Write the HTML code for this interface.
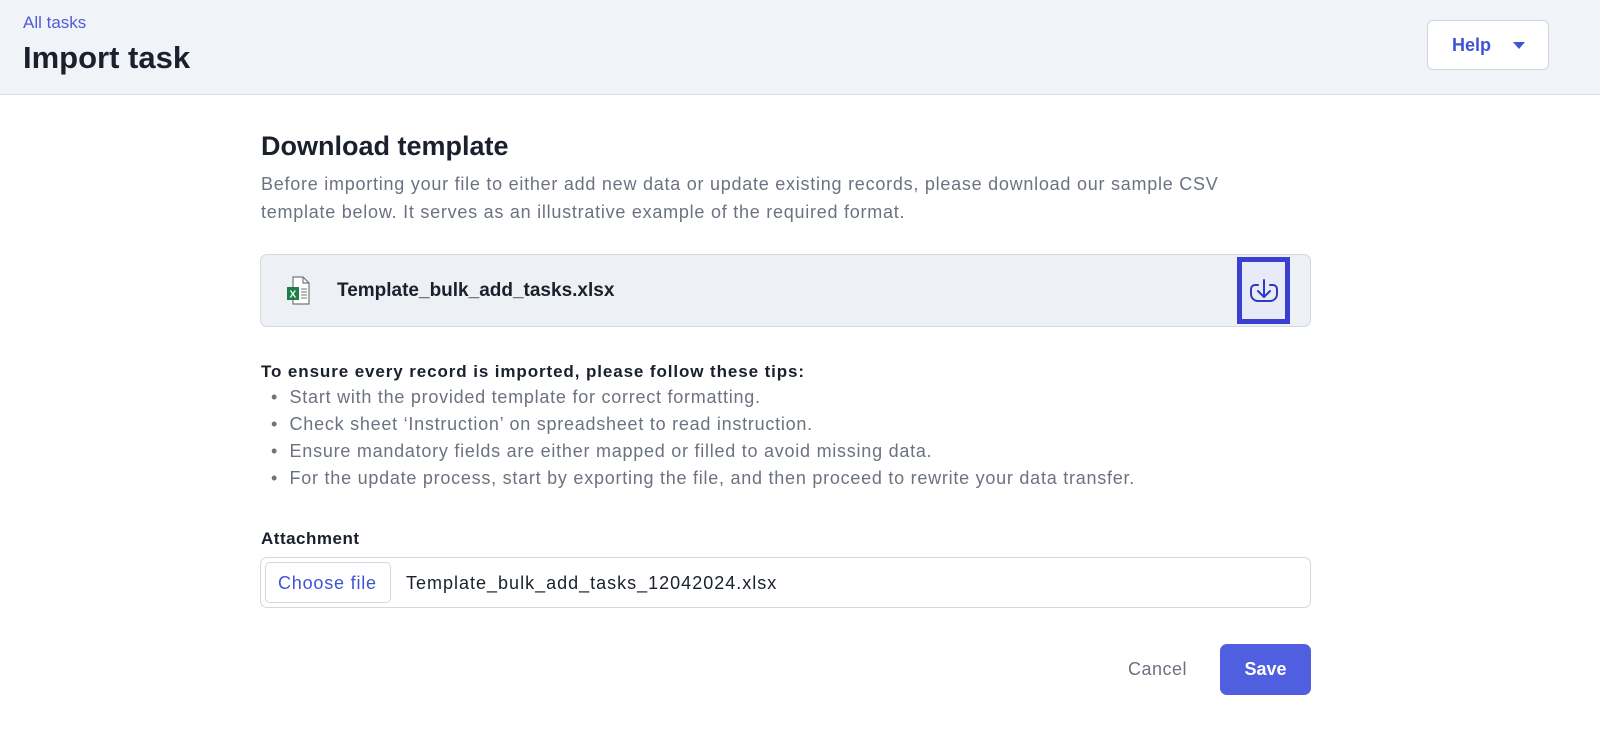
<!DOCTYPE html>
<html><head><style>
*{box-sizing:border-box;margin:0;padding:0}
body{width:1600px;height:744px;background:#fff;font-family:"Liberation Sans",sans-serif;color:#1a202c;position:relative;overflow:hidden}
.hdr{position:absolute;left:0;top:0;width:1600px;height:95px;background:#f0f3f8;border-bottom:1px solid #d5dae3}
.a{position:absolute;left:23px;top:13px;font-size:17px;color:#4f5bd5}
.t{position:absolute;left:23px;top:40px;font-size:31px;font-weight:bold;color:#1a202c}
.help{position:absolute;left:1427px;top:20px;width:122px;height:50px;background:#fff;border:1px solid #cfd5df;border-radius:6px;font-size:18px;font-weight:bold;color:#4053d6;padding:14px 0 0 24px}
.help:after{content:"";position:absolute;left:85px;top:21px;border-left:6px solid transparent;border-right:6px solid transparent;border-top:7px solid #4053d6}
.abs{position:absolute;white-space:nowrap}
.p{font-size:18px;color:#6b7280;line-height:28px;letter-spacing:0.75px}
</style></head><body>
<div class="hdr"><div class="a">All tasks</div><div class="t">Import task</div><div class="help">Help</div></div>
<div class="abs" style="left:261px;top:131px;font-size:27px;font-weight:bold">Download template</div>
<div class="abs p" style="left:261px;top:170px">Before importing your file to either add new data or update existing records, please download our sample CSV<br>template below. It serves as an illustrative example of the required format.</div>
<div class="abs" style="left:260px;top:254px;width:1051px;height:73px;background:#edf0f4;border:1px solid #d3d8e0;border-radius:7px"></div>
<svg class="abs" style="left:285px;top:276px" width="30" height="30" viewBox="0 0 30 30">
<path d="M8 1h10l6 6v21H8z" fill="#fff" stroke="#777" stroke-width="1.2"/><path d="M18 1v6h6" fill="none" stroke="#777" stroke-width="1.2"/>
<rect x="2" y="11" width="12" height="13" fill="#1e7e45"/><text x="4.5" y="21.5" font-size="10" font-weight="bold" fill="#fff" font-family="Liberation Sans">X</text>
<g fill="#bbb"><rect x="16" y="12" width="6" height="2"/><rect x="16" y="15" width="6" height="2"/><rect x="16" y="18" width="6" height="2"/><rect x="16" y="21" width="6" height="2"/></g></svg>
<div class="abs" style="left:337px;top:280px;font-size:19px;font-weight:bold">Template_bulk_add_tasks.xlsx</div>
<div class="abs" style="left:1237px;top:257px;width:53px;height:67px;border:5px solid #3b3fcf;background:#e8eaf7"></div>
<svg class="abs" style="left:1247px;top:274px" width="34" height="34" viewBox="0 0 34 34" fill="none" stroke="#2b3bc4" stroke-width="2" stroke-linecap="round" stroke-linejoin="round">
<path d="M17 6v17M11 17l6 6 6-6"/><path d="M11 11H8a4 4 0 0 0-4 4v5a7 7 0 0 0 7 7h12a7 7 0 0 0 7-7v-5a4 4 0 0 0-4-4h-3"/></svg>
<div class="abs" style="left:261px;top:362px;font-size:17px;font-weight:bold;letter-spacing:0.9px">To ensure every record is imported, please follow these tips:</div>
<div class="abs p" style="left:271px;top:384px;line-height:27px">
• &nbsp;Start with the provided template for correct formatting.<br>• &nbsp;Check sheet ‘Instruction’ on spreadsheet to read instruction.<br>• &nbsp;Ensure mandatory fields are either mapped or filled to avoid missing data.<br>• &nbsp;For the update process, start by exporting the file, and then proceed to rewrite your data transfer.</div>
<div class="abs" style="left:261px;top:529px;font-size:17px;font-weight:bold;letter-spacing:0.5px">Attachment</div>
<div class="abs" style="left:260px;top:557px;width:1051px;height:51px;border:1px solid #d3d8e0;border-radius:7px"></div>
<div class="abs" style="left:265px;top:562px;width:126px;height:41px;border:1px solid #d3d8e0;border-radius:5px;font-size:18px;color:#4053d6;padding:10px 0 0 12px;letter-spacing:0.8px">Choose file</div>
<div class="abs" style="left:406px;top:573px;font-size:18px;letter-spacing:1px">Template_bulk_add_tasks_12042024.xlsx</div>
<div class="abs" style="left:1128px;top:659px;font-size:18px;color:#6b7280;letter-spacing:0.5px">Cancel</div>
<div class="abs" style="left:1220px;top:644px;width:91px;height:51px;background:#4f5fe0;border-radius:7px;color:#fff;font-size:18px;font-weight:bold;text-align:center;line-height:51px">Save</div>
</body></html>
